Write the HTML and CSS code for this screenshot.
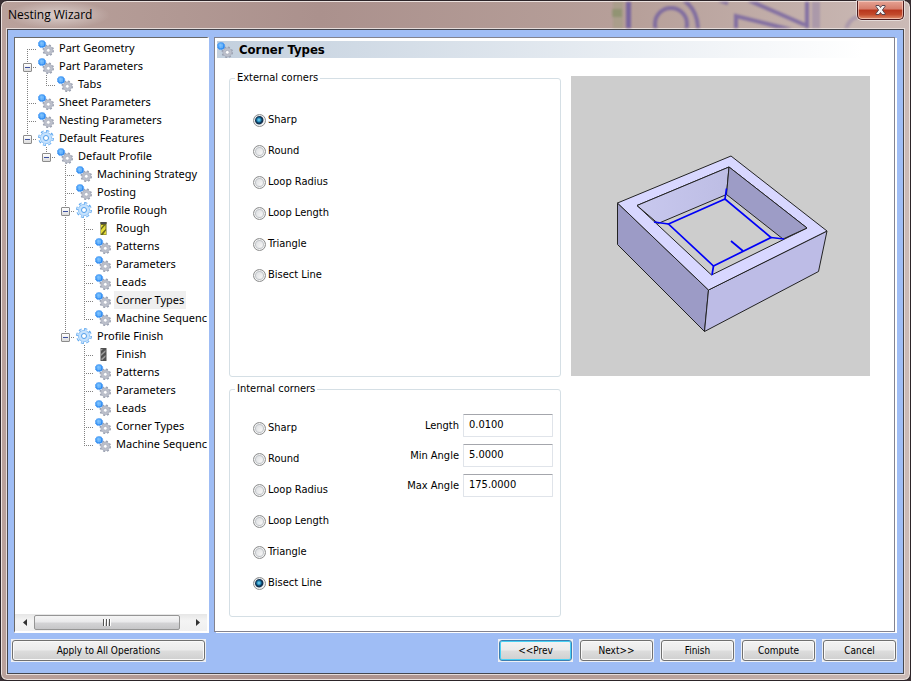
FILE: index.html
```html
<!DOCTYPE html>
<html lang="en">
<head>
<meta charset="utf-8">
<title>Nesting Wizard</title>
<link rel="stylesheet" href="styles.css">
</head>
<body>
<svg class="defs" width="0" height="0" aria-hidden="true">
  <defs>
    <radialGradient id="hub" cx=".4" cy=".35" r=".7">
      <stop offset="0" stop-color="#6fbcff"/><stop offset="1" stop-color="#1f80ee"/>
    </radialGradient>
    <linearGradient id="inner" x1="0" y1="0" x2="1" y2="0">
      <stop offset="0" stop-color="#c8c8ee"/><stop offset="1" stop-color="#bdbde4"/>
    </linearGradient>
    <symbol id="gears" viewBox="0 0 16 16">
      <circle cx="10.3" cy="10.300" r="4.900" fill="none" stroke="#9aa0b0" stroke-width="1.700" stroke-dasharray="2 1.848"/>
      <circle cx="10.3" cy="10.300" r="3.200" fill="none" stroke="#bcc0cb" stroke-width="2.600"/>
      <circle cx="10.3" cy="10.300" r="4.400" fill="none" stroke="#a5aab8" stroke-width=".6"/>
      <circle cx="10.3" cy="10.300" r="1.900" fill="#fff" stroke="#989eae" stroke-width=".6"/>
      <circle cx="4" cy="4" r="3.600" fill="url(#hub)"/>
      <circle cx="4" cy="4" r="3.700" fill="none" stroke="#3f93f4" stroke-width=".9" stroke-dasharray="1.400 .924"/>
      <path d="M2 3.200h4M2 5h4M3.300 1.800v4.600M5 1.800v4.600" stroke="#8fcaff" stroke-width=".5"/>
    </symbol>
    <symbol id="gear" viewBox="0 0 16 16">
      <circle cx="8" cy="8" r="6.700" fill="none" stroke="#5aa5ee" stroke-width="2.400" stroke-dasharray="2.900 2.362"/>
      <circle cx="8" cy="8" r="5.700" fill="#c6e2fd" stroke="#7ab8f4" stroke-width=".8"/>
      <circle cx="8" cy="8" r="6.300" fill="none" stroke="#c6e2fd" stroke-width="1.800" stroke-dasharray="1.900 3.048" stroke-dashoffset="-.4"/>
      <circle cx="8" cy="8" r="2.500" fill="#fff" stroke="#4f9eec" stroke-width="1"/>
    </symbol>
    <symbol id="rough" viewBox="0 0 16 16">
      <path d="M5.500 2h6v13h-6z" fill="#6a691c"/>
      <path d="M5.500 2h6v2h-6z" fill="#4b4b4b"/>
      <path d="M6 10l4.500-5v4L6 14zM6 5h2.500L6 8zM8 14.500l3-4v4z" fill="#e4dc38"/>
    </symbol>
    <symbol id="finish" viewBox="0 0 16 16">
      <path d="M5.500 2h6v13h-6z" fill="#505050"/>
      <path d="M6 8l4.500-4v2L6 10zM6 13l4.500-4v2L7 14.500zM6 3h2L6 5z" fill="#9c9c9c"/>
    </symbol>
  </defs>
</svg>

<div class="window">
  <header class="titlebar">
    <svg class="backdrop" viewBox="0 2 304 26" aria-hidden="true">
      <path d="M13 0h10v28H13z" fill="#8f9a6c" opacity=".3"/>
      <path d="M12 9h10v8H12z" fill="#6f8450" opacity=".4"/>
      <path d="M26 -2h5v32h-5z" fill="#6a58a0" opacity=".8"/>
      <g fill="none" stroke="#6a58a0" stroke-width="4" opacity=".7">
        <circle cx="71" cy="24" r="16"/>
        <path d="M76 -4c14 6 22 16 22 34M112 -2l16 5M136 30V16L200 32M141 -3l64 28"/>
        <path d="M207 -2v32"/>
        <path d="M246 30c2-10 10-16 22-13" opacity=".4"/>
      </g>
      <path d="M212 0h8v28h-8z" fill="#7d6ca6" opacity=".35"/>
    </svg>
    <h1 class="caption">Nesting Wizard</h1>
    <button class="close" type="button" aria-label="Close">
      <svg width="11" height="10" viewBox="0 0 11 10" aria-hidden="true">
        <path d="M1 .5h3l1.500 2L7 .5h3v1L7.400 5 10 8.500v1H7l-1.500-2-1.500 2H1v-1L3.600 5 1 1.500z" fill="#f4f4f4" stroke="#4a3c48" stroke-width=".9"/>
      </svg>
    </button>
  </header>

  <form class="client">
    <div class="panes">
      <nav class="tree-pane" aria-label="Wizard pages">
        <ul class="tree">
          <li><div class="node"><svg class="icon"><use href="#gears"/></svg><span class="label">Part Geometry</span></div></li>
          <li><div class="node"><button class="toggle" type="button" aria-label="Collapse"></button><svg class="icon"><use href="#gears"/></svg><span class="label">Part Parameters</span></div>
            <ul>
              <li><div class="node"><svg class="icon"><use href="#gears"/></svg><span class="label">Tabs</span></div></li>
            </ul>
          </li>
          <li><div class="node"><svg class="icon"><use href="#gears"/></svg><span class="label">Sheet Parameters</span></div></li>
          <li><div class="node"><svg class="icon"><use href="#gears"/></svg><span class="label">Nesting Parameters</span></div></li>
          <li><div class="node"><button class="toggle" type="button" aria-label="Collapse"></button><svg class="icon"><use href="#gear"/></svg><span class="label">Default Features</span></div>
            <ul>
              <li><div class="node"><button class="toggle" type="button" aria-label="Collapse"></button><svg class="icon"><use href="#gears"/></svg><span class="label">Default Profile</span></div>
                <ul>
                  <li><div class="node"><svg class="icon"><use href="#gears"/></svg><span class="label">Machining Strategy</span></div></li>
                  <li><div class="node"><svg class="icon"><use href="#gears"/></svg><span class="label">Posting</span></div></li>
                  <li><div class="node"><button class="toggle" type="button" aria-label="Collapse"></button><svg class="icon"><use href="#gear"/></svg><span class="label">Profile Rough</span></div>
                    <ul>
                      <li><div class="node"><svg class="icon"><use href="#rough"/></svg><span class="label">Rough</span></div></li>
                      <li><div class="node"><svg class="icon"><use href="#gears"/></svg><span class="label">Patterns</span></div></li>
                      <li><div class="node"><svg class="icon"><use href="#gears"/></svg><span class="label">Parameters</span></div></li>
                      <li><div class="node"><svg class="icon"><use href="#gears"/></svg><span class="label">Leads</span></div></li>
                      <li><div class="node"><svg class="icon"><use href="#gears"/></svg><span class="label selected">Corner Types</span></div></li>
                      <li><div class="node"><svg class="icon"><use href="#gears"/></svg><span class="label">Machine Sequence</span></div></li>
                    </ul>
                  </li>
                  <li><div class="node"><button class="toggle" type="button" aria-label="Collapse"></button><svg class="icon"><use href="#gear"/></svg><span class="label">Profile Finish</span></div>
                    <ul>
                      <li><div class="node"><svg class="icon"><use href="#finish"/></svg><span class="label">Finish</span></div></li>
                      <li><div class="node"><svg class="icon"><use href="#gears"/></svg><span class="label">Patterns</span></div></li>
                      <li><div class="node"><svg class="icon"><use href="#gears"/></svg><span class="label">Parameters</span></div></li>
                      <li><div class="node"><svg class="icon"><use href="#gears"/></svg><span class="label">Leads</span></div></li>
                      <li><div class="node"><svg class="icon"><use href="#gears"/></svg><span class="label">Corner Types</span></div></li>
                      <li><div class="node"><svg class="icon"><use href="#gears"/></svg><span class="label">Machine Sequence</span></div></li>
                    </ul>
                  </li>
                </ul>
              </li>
            </ul>
          </li>
        </ul>
        <div class="scrollbar">
          <button class="arrow" type="button" aria-label="Scroll left"><svg width="4" height="7" viewBox="0 0 4 7"><path d="M4 0v7L0 3.500z" fill="#333"/></svg></button>
          <div class="thumb"><i></i><i></i><i></i></div>
          <button class="arrow" type="button" aria-label="Scroll right"><svg width="4" height="7" viewBox="0 0 4 7"><path d="M0 0v7l4-3.500z" fill="#333"/></svg></button>
        </div>
      </nav>

      <main class="page">
        <div class="page-head">
          <svg class="icon"><use href="#gears"/></svg>
          <h2>Corner Types</h2>
        </div>
        <div class="page-body">
          <div class="groups">
            <fieldset class="external">
              <legend>External corners</legend>
              <div class="choices">
                <label><input type="radio" name="external" checked>Sharp</label>
                <label><input type="radio" name="external">Round</label>
                <label><input type="radio" name="external">Loop Radius</label>
                <label><input type="radio" name="external">Loop Length</label>
                <label><input type="radio" name="external">Triangle</label>
                <label><input type="radio" name="external">Bisect Line</label>
              </div>
            </fieldset>
            <fieldset class="internal">
              <legend>Internal corners</legend>
              <div class="choices">
                <label><input type="radio" name="internal">Sharp</label>
                <label><input type="radio" name="internal">Round</label>
                <label><input type="radio" name="internal">Loop Radius</label>
                <label><input type="radio" name="internal">Loop Length</label>
                <label><input type="radio" name="internal">Triangle</label>
                <label><input type="radio" name="internal" checked>Bisect Line</label>
              </div>
              <div class="values">
                <label for="length">Length</label><input id="length" type="text" value="0.0100">
                <label for="min-angle">Min Angle</label><input id="min-angle" type="text" value="5.0000">
                <label for="max-angle">Max Angle</label><input id="max-angle" type="text" value="175.0000">
              </div>
            </fieldset>
          </div>
          <svg class="preview" viewBox="0 0 299 300" role="img" aria-label="Pocket with bisect line corners">
            <path d="M0 0h299v300H0z" fill="#cdcdcd"/>
            <g stroke="#222" stroke-width="1" stroke-linejoin="round">
              <path d="M46.500 127L137.500 214 133.500 255.500 46.500 168.500z" fill="#9c9bc6"/>
              <path d="M137.500 214L256 155 247.500 195.500 133.500 255.500z" fill="#bdbce6"/>
              <path fill-rule="evenodd" d="M160 80L256 155 137.500 214 46.500 127zM158 91L66 129.500 140.500 199 236 152z" fill="#d8d7ff"/>
              <path d="M66 129.500L158 91 155.500 118.500 87 147.500z" fill="url(#inner)"/>
              <path d="M158 91L236 152 212 163 155.500 118.500z" fill="#9d9cc6"/>
            </g>
            <g fill="none" stroke="#0000f8" stroke-width="1.700">
              <path d="M97.500 148L154 123 200 161.500 142.500 190z"/>
              <path d="M83 146l14.500 2M155.500 112.500L154 123M200 161.500l13 1.500M142.500 190l-1.500 9M160 165l12 10"/>
            </g>
          </svg>
        </div>
      </main>
    </div>

    <footer class="actions">
      <button class="push apply" type="button"><span>Apply to All Operations</span></button>
      <button class="push default" type="button"><span>&lt;&lt;Prev</span></button>
      <button class="push" type="button"><span>Next&gt;&gt;</span></button>
      <button class="push" type="button"><span>Finish</span></button>
      <button class="push" type="button"><span>Compute</span></button>
      <button class="push" type="button"><span>Cancel</span></button>
    </footer>
  </form>
</div>
</body>
</html>
```
FILE: styles.css
```css
* { box-sizing: border-box; }

body {
  margin: 0;
  background: #3a3034;
  color: #000;
  font: 11px/14px "DejaVu Sans Condensed", "DejaVu Sans", sans-serif;
}

h1, h2, ul, fieldset, legend { margin: 0; padding: 0; }
button, input { font: inherit; color: inherit; }
.defs { position: absolute; }

/* Window frame */
.window {
  display: flex;
  flex-direction: column;
  min-height: 100vh;
  padding: 0 6px 6px;
  border: 1px solid #2c2428;
  border-radius: 7px;
  background: linear-gradient(90deg, #b9a19b, #ab918d 35%, #b7a09a 70%, #cbbab6);
  box-shadow: inset 0 0 0 1px #ece2df;
}

.titlebar {
  position: relative;
  display: flex;
  justify-content: space-between;
  align-items: flex-start;
  height: 28px;
}

.backdrop {
  position: absolute;
  top: 1px;
  right: 0;
  width: 304px;
  height: 26px;
  filter: blur(1px);
}

.caption {
  position: relative;
  padding: 5px 18px 5px 1px;
  background: radial-gradient(closest-side, rgba(255, 255, 255, .5), rgba(255, 255, 255, 0));
  font: 12px/18px "Open Sans", "Noto Sans", sans-serif;
}

.close {
  position: relative;
  display: grid;
  place-items: center;
  width: 47px;
  height: 19px;
  padding: 0;
  border: 1px solid #4a1a1c;
  border-top: 0;
  border-radius: 0 0 5px 5px;
  background: linear-gradient(#e6a394, #d57c6a 45%, #b8351c 50%, #c24a2c 75%, #e08e6c);
  box-shadow: inset 0 0 0 1px rgba(255, 220, 210, .6), 0 0 0 1px rgba(255, 255, 255, .5);
}

.client {
  display: flex;
  flex: 1;
  flex-direction: column;
  gap: 6px;
  padding: 7px 6px 11px 3px;
  border: 1px solid #44464e;
  background: #9fbdf5;
  box-shadow: 0 0 0 1px #e6dcda;
}

.panes {
  display: grid;
  flex: 1;
  grid-template-columns: 195px minmax(0, 1fr);
  gap: 5px;
  padding-left: 3px;
}

/* Tree */
.tree-pane {
  display: flex;
  flex-direction: column;
  justify-content: space-between;
  min-width: 0;
  padding-top: 1px;
  border: solid #fff;
  border-width: 1px 2px 2px 1px;
  border-top-color: #696969;
  border-left-color: #696969;
  background: #fff;
}

.tree {
  padding-left: 7px;
  overflow: hidden;
  font: 11px/18px "Noto Sans", "Open Sans", sans-serif;
}

.tree ul { padding-left: 19px; }

.tree li {
  list-style: none;
  background:
    repeating-linear-gradient(#808080 0 1px, transparent 1px 2px) 5px 0 / 1px 100% no-repeat,
    repeating-linear-gradient(90deg, #808080 0 1px, transparent 1px 2px) 5px 10px / 10px 1px no-repeat;
}

.tree li:last-child { background-size: 1px 11px, 10px 1px; }

.tree > li:first-child { background-position: 5px 10px, 5px 10px; }

.node {
  position: relative;
  display: flex;
  align-items: center;
  gap: 3px;
  height: 18px;
  padding-left: 16px;
  white-space: nowrap;
}

.icon {
  flex: none;
  width: 16px;
  height: 16px;
}

.label { padding: 0 2px; }
.selected { background: #efefef; }

.toggle {
  position: absolute;
  top: 6px;
  left: 1px;
  width: 9px;
  height: 9px;
  padding: 0;
  border: 1px solid #8c8c8c;
  border-radius: 1px;
  background: linear-gradient(#3c50a0, #3c50a0) center / 5px 1px no-repeat, linear-gradient(#fff, #dcdcdc);
}

.scrollbar {
  display: flex;
  align-items: center;
  height: 17px;
  padding-left: 1px;
  background: linear-gradient(#e6e6e6, #f4f4f4 40%, #f0f0f0);
}

.arrow {
  display: grid;
  place-items: center;
  width: 18px;
  height: 17px;
  padding: 0;
  border: 0;
  background: none;
}

.thumb {
  display: flex;
  flex: 1;
  justify-content: center;
  align-items: center;
  gap: 1px;
  height: 15px;
  margin-right: 9px;
  border: 1px solid #959595;
  border-radius: 2px;
  background: linear-gradient(#f5f5f5, #e9e9eb 48%, #d4d4d6 52%, #c6c6c8);
}

.thumb i {
  width: 2px;
  height: 7px;
  border-left: 1px solid #555;
  background: #fff;
}

/* Page */
.page {
  margin: 0 2px 1px 0;
  border: 1px solid #83838f;
  background: #fff;
  box-shadow: 2px 1px #fff;
}

.page-head {
  display: flex;
  align-items: center;
  gap: 6px;
  height: 17px;
  margin: 3px 4px 0 2px;
  background: linear-gradient(90deg, #c3d0de, #fff 96%);
}

.page-head h2 {
  font: bold 13px/17px "DejaVu Sans Condensed", "DejaVu Sans", sans-serif;
}

.page-body {
  display: grid;
  grid-template-columns: 332fr 299fr;
  align-items: start;
  gap: 10px;
  padding: 13px 24px 14px 14px;
}

.groups {
  display: grid;
  gap: 5px;
}

fieldset {
  display: flex;
  justify-content: space-between;
  align-items: flex-start;
  min-width: 0;
  border: 1px solid #d5dfe5;
  border-radius: 3px;
}

legend {
  margin-left: -18px;
  padding: 0 2px;
}

.external { padding: 27px 7px 93px 23px; }
.internal { padding: 18px 7px 25px 23px; }

.choices {
  display: grid;
  gap: 15px;
}

.internal .choices { margin-top: 6px; }

.choices label {
  display: flex;
  align-items: center;
  gap: 2px;
  height: 16px;
}

input[type="radio"] {
  width: 13px;
  height: 13px;
  margin: 0;
  appearance: none;
  border: 1px solid #8e8f8f;
  border-radius: 50%;
  background: radial-gradient(circle at 65% 65%, #f4f4f4, #d3d6da);
  box-shadow: inset 0 0 0 1px #f4f4f4, inset 0 0 0 2px #c0c4c8;
}

input[type="radio"]:checked {
  background: radial-gradient(circle at 45% 45%, #8fe0f8 0, #1c86b8 2px, #103a5c 3px, #16304c 4px, #e6eaee 5px);
  box-shadow: inset 0 0 0 1px #f4f4f4;
}

.values {
  display: grid;
  grid-template-columns: auto 90px;
  align-items: center;
  gap: 7px 4px;
  text-align: right;
}

.values input {
  width: 100%;
  height: 23px;
  padding: 0 5px 3px;
  border: 1px solid #e0e4ea;
  border-top-color: #a4a6ac;
  border-radius: 1px;
  background: #fff;
}

.preview {
  display: block;
  width: 100%;
  margin-top: 5px;
}

/* Buttons */
.actions {
  display: flex;
  gap: 6px;
}

.push {
  display: flex;
  width: 75px;
  height: 23px;
  padding: 0;
  border: 1px solid #eef0f4;
  background: #eef0f4;
  font-size: 10px;
}

.push span {
  display: grid;
  place-items: center;
  flex: 1;
  height: 21px;
  border: 1px solid #707070;
  border-radius: 3px;
  background: linear-gradient(#f3f3f3, #ebebeb 48%, #ddd 52%, #cfcfcf);
  box-shadow: inset 0 0 0 1px #fafafa;
}

.push.default span {
  border-color: #3c7fb1;
  box-shadow: inset 0 0 0 1px #48d0f4;
}

.push.apply {
  width: 195px;
  margin-right: auto;
}
```
